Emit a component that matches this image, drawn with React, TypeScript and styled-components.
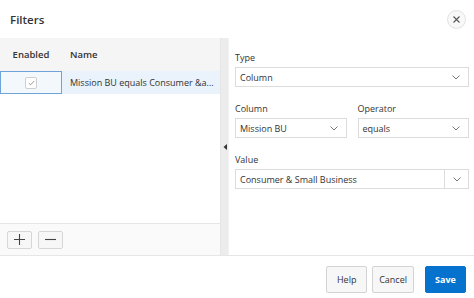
import styled, { createGlobalStyle } from "styled-components";

const GlobalStyle = createGlobalStyle`
  html, body {
    margin: 0;
    padding: 0;
    background: #ffffff;
  }
  body {
    font-family: "Open Sans", "Noto Sans", sans-serif;
    color: #333333;
  }
`;

const colors = {
  text: "#333333",
  border: "#dcdcdc",
  softBorder: "#e6e6e6",
  headerBg: "#f5f5f5",
  barBg: "#fafafa",
  selected: "#eaf2fb",
  focus: "#6fa3d9",
  primary: "#0572ce",
};

const Dialog = styled.div`
  width: 474px;
  height: 298px;
  display: flex;
  flex-direction: column;
  background: #ffffff;
`;

const Header = styled.div`
  height: 38px;
  display: flex;
  align-items: center;
  justify-content: space-between;
  padding: 0 8px 0 10px;
  box-sizing: border-box;
`;

const Title = styled.div`
  font-size: 11.5px;
  font-weight: 600;
  color: ${colors.text};
`;

const CloseButton = styled.button`
  width: 19px;
  height: 19px;
  border-radius: 50%;
  border: 1px solid #e2e2e2;
  background: #f8f8f8;
  display: flex;
  align-items: center;
  justify-content: center;
  padding: 0;
`;

const Body = styled.div`
  display: flex;
  height: 217px;
`;

const LeftPanel = styled.div`
  width: 221px;
  display: flex;
  flex-direction: column;
  border-right: 1px solid ${colors.softBorder};
  box-sizing: border-box;
`;

const TableHead = styled.div`
  height: 33px;
  display: grid;
  grid-template-columns: 62px 1fr;
  align-items: center;
  background: ${colors.headerBg};
  font-size: 9.5px;
  font-weight: 600;
  color: ${colors.text};
`;

const HeadCell = styled.div<{ $center?: boolean }>`
  padding-left: ${(p) => (p.$center ? "0" : "8px")};
  text-align: ${(p) => (p.$center ? "center" : "left")};
`;

const TableRow = styled.div`
  height: 23px;
  display: grid;
  grid-template-columns: 62px 1fr;
  background: ${colors.selected};
  font-size: 9px;
  color: ${colors.text};
`;

const CheckCell = styled.div`
  border: 1px solid ${colors.focus};
  display: flex;
  align-items: center;
  justify-content: center;
  background: #f3f8fd;
`;

const CheckBox = styled.div`
  width: 10px;
  height: 10px;
  border: 1px solid #cfcfcf;
  border-radius: 2px;
  background: #ffffff;
  display: flex;
  align-items: center;
  justify-content: center;
`;

const NameCell = styled.div`
  display: flex;
  align-items: center;
  padding-left: 8px;
  white-space: nowrap;
  overflow: hidden;
`;

const TableSpace = styled.div`
  flex: 1;
  background: #ffffff;
`;

const ToolBar = styled.div`
  height: 32px;
  display: flex;
  align-items: center;
  gap: 6px;
  padding-left: 7px;
  background: ${colors.barBg};
  border-top: 1px solid ${colors.softBorder};
  box-sizing: border-box;
`;

const IconButton = styled.button`
  width: 25px;
  height: 18px;
  border: 1px solid #d6d6d6;
  border-radius: 2px;
  background: #f7f7f7;
  display: flex;
  align-items: center;
  justify-content: center;
  padding: 0;
`;

const Splitter = styled.div`
  width: 7px;
  background: #ececec;
  display: flex;
  align-items: center;
  justify-content: center;
  border-right: 1px solid #f2f2f2;
`;

const RightPanel = styled.div`
  flex: 1;
  padding: 12px 5px 0 6px;
  display: flex;
  flex-direction: column;
  gap: 14px;
`;

const Field = styled.div`
  display: flex;
  flex-direction: column;
  gap: 1px;
  min-width: 0;
`;

const FieldRow = styled.div`
  display: grid;
  grid-template-columns: 1fr 1fr;
  gap: 11px;
`;

const Label = styled.div`
  font-size: 9px;
  line-height: 16px;
  color: ${colors.text};
`;

const Select = styled.div`
  height: 20px;
  border: 1px solid ${colors.border};
  background: #ffffff;
  display: flex;
  align-items: center;
  justify-content: space-between;
  padding: 0 8px 0 4px;
  font-size: 9px;
  color: ${colors.text};
  box-sizing: border-box;
`;

const Combo = styled.div`
  height: 20px;
  border: 1px solid ${colors.border};
  display: grid;
  grid-template-columns: 1fr 24px;
  font-size: 9px;
  box-sizing: border-box;
`;

const ComboText = styled.div`
  display: flex;
  align-items: center;
  padding-left: 4px;
`;

const ComboButton = styled.div`
  border-left: 1px solid ${colors.border};
  display: flex;
  align-items: center;
  justify-content: center;
`;

const Footer = styled.div`
  flex: 1;
  border-top: 1px solid ${colors.softBorder};
  display: flex;
  justify-content: flex-end;
  align-items: flex-start;
  gap: 5px;
  padding: 10px 8px 0 0;
`;

const Button = styled.button<{ $primary?: boolean }>`
  height: 27px;
  min-width: 41px;
  padding: 0 6px;
  margin-left: ${(p) => (p.$primary ? "6px" : "0")};
  border-radius: 2px;
  font-family: "Open Sans", "Noto Sans", sans-serif;
  font-size: 9px;
  font-weight: ${(p) => (p.$primary ? 700 : 400)};
  color: ${(p) => (p.$primary ? "#ffffff" : colors.text)};
  background: ${(p) => (p.$primary ? colors.primary : "#f7f7f7")};
  border: 1px solid ${(p) => (p.$primary ? colors.primary : "#d3d3d3")};
`;

const Chevron = () => (
  <svg width="8" height="5" viewBox="0 0 8 5">
    <path d="M0.5 0.5 L4 4 L7.5 0.5" fill="none" stroke="#777" strokeWidth="1" />
  </svg>
);

export default function App() {
  return (
    <>
      <GlobalStyle />
      <Dialog>
        <Header>
          <Title>Filters</Title>
          <CloseButton aria-label="Close">
            <svg width="7" height="7" viewBox="0 0 7 7">
              <path d="M0.5 0.5 L6.5 6.5 M6.5 0.5 L0.5 6.5" stroke="#555" strokeWidth="1.1" />
            </svg>
          </CloseButton>
        </Header>
        <Body>
          <LeftPanel>
            <TableHead>
              <HeadCell $center>Enabled</HeadCell>
              <HeadCell>Name</HeadCell>
            </TableHead>
            <TableRow>
              <CheckCell>
                <CheckBox>
                  <svg width="7" height="6" viewBox="0 0 7 6">
                    <path d="M0.8 3.2 L2.6 4.8 L6.2 1" fill="none" stroke="#9a9a9a" strokeWidth="1" />
                  </svg>
                </CheckBox>
              </CheckCell>
              <NameCell>Mission BU equals Consumer &amp;a...</NameCell>
            </TableRow>
            <TableSpace />
            <ToolBar>
              <IconButton aria-label="Add">
                <svg width="11" height="11" viewBox="0 0 11 11">
                  <path d="M5.5 0 V11 M0 5.5 H11" stroke="#444" strokeWidth="1.1" />
                </svg>
              </IconButton>
              <IconButton aria-label="Remove">
                <svg width="11" height="11" viewBox="0 0 11 11">
                  <path d="M0 5.5 H11" stroke="#444" strokeWidth="1.1" />
                </svg>
              </IconButton>
            </ToolBar>
          </LeftPanel>
          <Splitter>
            <svg width="4" height="6" viewBox="0 0 4 6">
              <path d="M4 0 L0.5 3 L4 6 Z" fill="#333" />
            </svg>
          </Splitter>
          <RightPanel>
            <Field>
              <Label>Type</Label>
              <Select>
                Column
                <Chevron />
              </Select>
            </Field>
            <FieldRow>
              <Field>
                <Label>Column</Label>
                <Select>
                  Mission BU
                  <Chevron />
                </Select>
              </Field>
              <Field>
                <Label>Operator</Label>
                <Select>
                  equals
                  <Chevron />
                </Select>
              </Field>
            </FieldRow>
            <Field>
              <Label>Value</Label>
              <Combo>
                <ComboText>Consumer &amp; Small Business</ComboText>
                <ComboButton>
                  <Chevron />
                </ComboButton>
              </Combo>
            </Field>
          </RightPanel>
        </Body>
        <Footer>
          <Button>Help</Button>
          <Button>Cancel</Button>
          <Button $primary>Save</Button>
        </Footer>
      </Dialog>
    </>
  );
}
